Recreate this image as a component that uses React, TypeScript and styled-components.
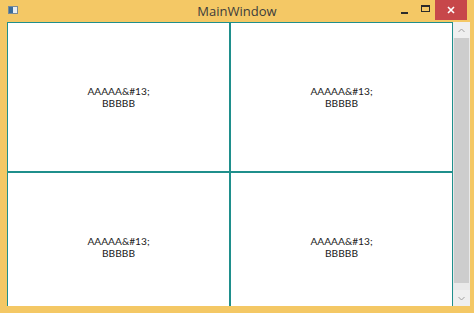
import styled, { createGlobalStyle } from 'styled-components';

const Global = createGlobalStyle`
  html, body {
    margin: 0;
    padding: 0;
    background: #f4c865;
  }
`;

const Window = styled.div`
  width: 474px;
  height: 313px;
  display: flex;
  flex-direction: column;
  background: #f4c865;
  font-family: 'Open Sans', 'Noto Sans', sans-serif;
  overflow: hidden;
`;

const TitleBar = styled.div`
  height: 22px;
  display: flex;
  align-items: center;
  position: relative;
`;

const AppIcon = styled.div`
  width: 10px;
  height: 8px;
  margin-left: 8px;
  margin-top: -2px;
  background: #e9eef2;
  border: 1px solid #7a8a96;
  box-sizing: border-box;
  display: flex;
  &::before {
    content: '';
    width: 4px;
    background: #3b6d9a;
  }
`;

const Title = styled.div`
  position: absolute;
  left: 0;
  right: 0;
  top: 2px;
  text-align: center;
  font-size: 13px;
  color: #3c3c3c;
  pointer-events: none;
`;

const Controls = styled.div`
  margin-left: auto;
  margin-right: 7px;
  display: flex;
  align-self: flex-start;
  height: 20px;
`;

const CtrlBtn = styled.div<{ $w: number; $close?: boolean }>`
  width: ${(p) => p.$w}px;
  height: 20px;
  display: flex;
  align-items: center;
  justify-content: center;
  background: ${(p) => (p.$close ? '#c7474a' : 'transparent')};
`;

const MinGlyph = styled.div`
  width: 7px;
  height: 2px;
  background: #2b2b2b;
  margin-top: 5px;
`;

const MaxGlyph = styled.div`
  width: 9px;
  height: 7px;
  border: 1px solid #2b2b2b;
  border-top-width: 2px;
  box-sizing: border-box;
  margin-top: -4px;
`;

const Body = styled.div`
  flex: 1;
  display: flex;
  margin: 0 4px 7px 7px;
  background: #fff;
  min-height: 0;
`;

const Viewport = styled.div`
  flex: 1;
  overflow: hidden;
`;

const Grid = styled.div`
  display: grid;
  grid-template-columns: 1fr 1fr;
  grid-template-rows: 150px 150px;
`;

const Cell = styled.div`
  border: 1px solid #1f8f8c;
  display: flex;
  flex-direction: column;
  align-items: center;
  justify-content: center;
  font-family: Lato, 'Open Sans', sans-serif;
  font-size: 10.2px;
  color: #1a1a1a;
`;

const Line = styled.div`
  line-height: 12.5px;
  height: 12.5px;
`;

const ScrollBar = styled.div`
  width: 17px;
  display: flex;
  flex-direction: column;
  background: #e9e9e9;
`;

const Arrow = styled.div`
  height: 16px;
  display: flex;
  align-items: center;
  justify-content: center;
  background: #efefef;
`;

const Track = styled.div`
  flex: 1;
  padding: 0 1px 7px 1px;
  display: flex;
`;

const Thumb = styled.div`
  flex: 1;
  background: #cdcdcd;
`;

const Chevron = ({ up }: { up?: boolean }) => (
  <svg width="7" height="5" viewBox="0 0 7 5">
    <path
      d={up ? 'M0.5 4 L3.5 1 L6.5 4' : 'M0.5 1 L3.5 4 L6.5 1'}
      fill="none"
      stroke="#a0a0a0"
      strokeWidth="1"
    />
  </svg>
);

const CloseGlyph = () => (
  <svg width="8" height="8" viewBox="0 0 8 8">
    <path d="M1 1 L7 7 M7 1 L1 7" stroke="#fff" strokeWidth="1.6" />
  </svg>
);

export default function App(): JSX.Element {
  const cells = [0, 1, 2, 3];
  return (
    <Window>
      <Global />
      <TitleBar>
        <AppIcon />
        <Title>MainWindow</Title>
        <Controls>
          <CtrlBtn $w={22}>
            <MinGlyph />
          </CtrlBtn>
          <CtrlBtn $w={20}>
            <MaxGlyph />
          </CtrlBtn>
          <CtrlBtn $w={32} $close>
            <CloseGlyph />
          </CtrlBtn>
        </Controls>
      </TitleBar>
      <Body>
        <Viewport>
          <Grid>
            {cells.map((c) => (
              <Cell key={c}>
                <Line>AAAAA&amp;#13;</Line>
                <Line>BBBBB</Line>
              </Cell>
            ))}
          </Grid>
        </Viewport>
        <ScrollBar>
          <Arrow>
            <Chevron up />
          </Arrow>
          <Track>
            <Thumb />
          </Track>
          <Arrow>
            <Chevron />
          </Arrow>
        </ScrollBar>
      </Body>
    </Window>
  );
}
